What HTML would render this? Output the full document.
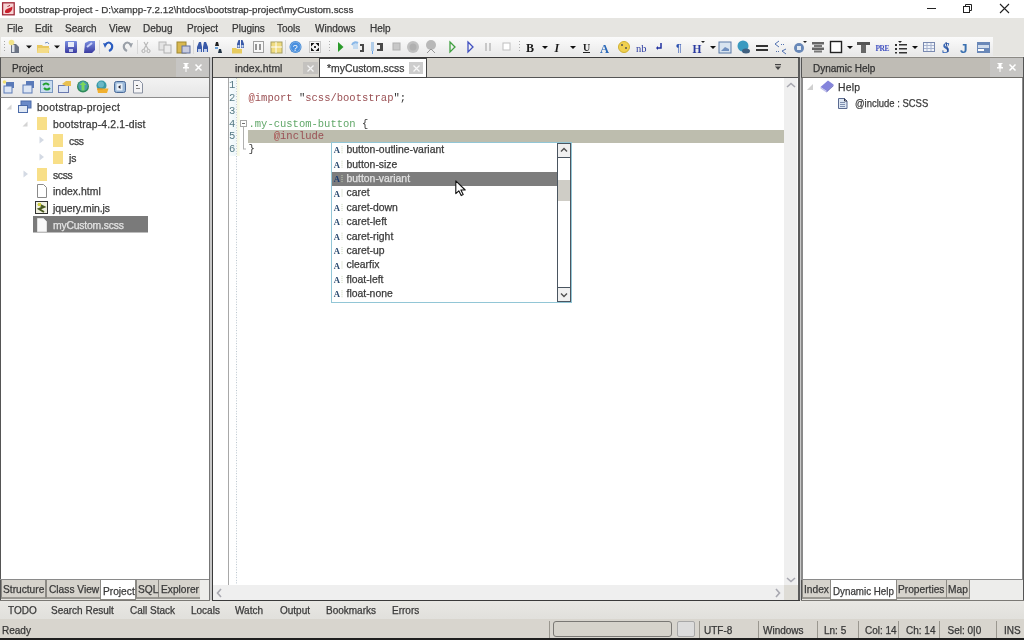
<!DOCTYPE html>
<html><head><meta charset="utf-8">
<style>
*{box-sizing:border-box}
html,body{margin:0;padding:0}
body{width:1024px;height:640px;position:relative;overflow:hidden;background:#e4e2dd;font-family:"Liberation Sans",sans-serif;font-size:10px;color:#3a3a3a}
.a{position:absolute}
.t{position:absolute;white-space:nowrap;line-height:1}
.t,.mn,.tr,.ac,.st,.ot{-webkit-text-stroke:0.25px currentColor}
svg{position:absolute;overflow:visible}
.mn{position:absolute;white-space:nowrap;line-height:1;top:24px;font-size:10px;color:#383838}
.cd{position:absolute;white-space:pre;line-height:1;font-family:"Liberation Mono",monospace;font-size:10.5px}
.tr{position:absolute;white-space:nowrap;line-height:1;font-size:10.4px;letter-spacing:0.2px;color:#3a3a3a}
.ac{position:absolute;white-space:nowrap;line-height:1;font-size:10.4px;color:#3a3a3a;left:346.5px}
.ai{position:absolute;left:334px;width:8px;height:9px}
.st{position:absolute;white-space:nowrap;line-height:1;font-size:10px;color:#383838;top:626px}
.sep{position:absolute;top:621px;width:1px;height:17px;background:#9a978f}
.ot{position:absolute;white-space:nowrap;line-height:1;font-size:10px;color:#3a3a3a;top:605.7px}
#wrap{position:absolute;left:0;top:0;width:1024px;height:640px;overflow:hidden;filter:blur(0.4px);will-change:transform}
</style></head><body><div id="wrap">
<!-- ===== TITLE BAR ===== -->
<div class="a" style="left:0;top:0;width:1024px;height:18px;background:#fff"></div>
<svg style="left:1px;top:1px" width="15" height="15" viewBox="0 0 15 15">
 <rect x="1.6" y="1.8" width="11.6" height="12" fill="#f6d4d4" stroke="#a02838" stroke-width="1.3"/>
 <path d="M4 11.5 Q3.5 8.5 7 7.5 Q10 6.5 11.5 5.5 Q11.5 10 8.5 11.5 Q6 12.5 4 11.5Z" fill="#c8202c"/>
 <path d="M6.5 6 Q7.5 4.5 9 4.5" stroke="#a02030" stroke-width="1" fill="none"/>
</svg>
<div class="t" style="left:19px;top:5.1px;font-size:9.8px;color:#3c3c3c">bootstrap-project - D:\xampp-7.2.12\htdocs\bootstrap-project\myCustom.scss</div>
<div class="a" style="left:927px;top:8px;width:9px;height:1px;background:#222"></div>
<svg style="left:962px;top:3px" width="11" height="11" viewBox="0 0 11 11"><rect x="1.5" y="3.5" width="6" height="6" fill="none" stroke="#222"/><path d="M3.5 3.5V1.5H9.5V7.5H7.5" fill="none" stroke="#222"/></svg>
<svg style="left:999px;top:3px" width="11" height="11" viewBox="0 0 11 11"><path d="M1 1L10 10M10 1L1 10" stroke="#222" stroke-width="1.1"/></svg>

<!-- ===== MENU BAR ===== -->
<div class="a" style="left:0;top:18px;width:1024px;height:19px;background:#e6e5e1"></div>
<div class="mn" style="left:7px">File</div>
<div class="mn" style="left:35px">Edit</div>
<div class="mn" style="left:65px">Search</div>
<div class="mn" style="left:109px">View</div>
<div class="mn" style="left:143px">Debug</div>
<div class="mn" style="left:187px">Project</div>
<div class="mn" style="left:232px">Plugins</div>
<div class="mn" style="left:277px">Tools</div>
<div class="mn" style="left:315px">Windows</div>
<div class="mn" style="left:370px">Help</div>

<!-- ===== TOOLBAR ===== -->
<div class="a" style="left:0;top:37px;width:1024px;height:20px;background:#e6e5e1"></div>
<div class="a" style="left:1px;top:37px;width:992px;height:19px;background:linear-gradient(#fbfbfb,#f0f0f0 60%,#e8e8e8)"></div>
<svg style="left:0;top:37px" width="993" height="19" viewBox="0 37 993 19">
 <defs>
  <linearGradient id="gb" x1="0" y1="0" x2="0" y2="1"><stop offset="0" stop-color="#7a8fe0"/><stop offset="1" stop-color="#3a3aa0"/></linearGradient>
  <linearGradient id="gy" x1="0" y1="0" x2="0" y2="1"><stop offset="0" stop-color="#f8e8a0"/><stop offset="1" stop-color="#d8b048"/></linearGradient>
 </defs>
 <!-- grip -->
 <g fill="#a8a8a8"><rect x="4" y="41" width="1" height="1"/><rect x="4" y="44" width="1" height="1"/><rect x="4" y="47" width="1" height="1"/><rect x="4" y="50" width="1" height="1"/></g>
 <!-- new -->
 <path d="M11 44h5l3 3v6h-8z" fill="#6a7384"/><rect x="12" y="45" width="2.5" height="7" fill="#dfe3ea"/><circle cx="11.5" cy="42.5" r="2.8" fill="#f2e48a"/>
 <path d="M26 45.5h6l-3 3z" fill="#111"/>
 <!-- open -->
 <path d="M37 45h5l1 1h6v7h-12z" fill="#e8c860"/><path d="M38 48h12l-2 5h-11z" fill="#f4dc88"/><path d="M45 43q3-2 4 1" stroke="#7090c0" fill="none"/>
 <path d="M54 45.5h6l-3 3z" fill="#111"/>
 <!-- save -->
 <rect x="65" y="41" width="12" height="12" rx="1" fill="url(#gb)"/><rect x="68" y="42" width="6" height="5" fill="#e8ecf8"/><rect x="69" y="49" width="4" height="3" fill="#c0c8e8"/>
 <!-- save all -->
 <path d="M85 43l4-2h6v9l-3 3h-8z" fill="url(#gb)"/><path d="M87 47l5-4" stroke="#c8d0f8" stroke-width="2"/>
 <rect x="99" y="40" width="1" height="14" fill="#d8d8d8"/>
 <!-- undo -->
 <path d="M105 45 q4-5 7 0 q1 4-3 6" stroke="#2a5cc0" stroke-width="2.2" fill="none"/><path d="M103 43l4 1-2 4z" fill="#2a5cc0"/>
 <!-- redo -->
 <path d="M131 45 q-4-5-7 0 q-1 4 3 6" stroke="#9aa0a8" stroke-width="2.2" fill="none"/><path d="M133 43l-4 1 2 4z" fill="#9aa0a8"/>
 <rect x="137" y="40" width="1" height="14" fill="#d8d8d8"/>
 <!-- cut -->
 <path d="M144 42l4 7M148 42l-4 7" stroke="#b8b8b8" stroke-width="1.2"/><circle cx="143.5" cy="51" r="1.6" fill="none" stroke="#b0b0b0"/><circle cx="148.5" cy="51" r="1.6" fill="none" stroke="#b0b0b0"/>
 <!-- copy -->
 <rect x="159" y="42" width="7" height="8" fill="#e4e4e4" stroke="#b8b8b8"/><rect x="164" y="45" width="7" height="8" fill="#ececec" stroke="#b0b0b0"/>
 <!-- paste -->
 <rect x="177" y="42" width="9" height="11" fill="#d8b850" stroke="#a08830"/><rect x="182" y="46" width="8" height="7" fill="#c8cce0" stroke="#6070a0"/>
 <rect x="193" y="40" width="1" height="14" fill="#d8d8d8"/>
 <!-- find -->
 <path d="M197 52v-5l2-5h2l1 5v5z M203 52v-5l1-5h2l2 5v5z" fill="#3a5aa8"/><rect x="198" y="49" width="3" height="3" fill="#c0d0f0"/><rect x="204" y="49" width="3" height="3" fill="#c0d0f0"/>
 <!-- replace -->
 <path d="M216 42h2l1 4h-4z" fill="#222"/><rect x="215" y="47" width="3" height="2" fill="#6aa0d8"/><path d="M219 49h2l1 4h-4z" fill="#234"/>
 <!-- find in files -->
 <path d="M232 48h4l1 1h5v4.5h-10z" fill="#e8cc60"/><path d="M237 48v-4l1.5-4h1.5v8zM241 48v-8h1.5l1.5 4v4z" fill="#3a5aa8"/><rect x="237.5" y="45" width="2" height="2.5" fill="#c8d8f0"/><rect x="241.5" y="45" width="2" height="2.5" fill="#c8d8f0"/>
 <!-- page grid -->
 <rect x="253.5" y="41.5" width="10" height="11" fill="#f8f8f8" stroke="#a0a0a0"/><path d="M256 44v6M260 44v6" stroke="#555" stroke-width="1.2"/>
 <rect x="271" y="42" width="11" height="11" fill="#f0dc80" stroke="#a8a060"/><path d="M276 42v11M271 47h11" stroke="#fff"/>
 <rect x="285" y="40" width="1" height="14" fill="#d8d8d8"/>
 <!-- help -->
 <circle cx="295.5" cy="47" r="6" fill="#3a80d0"/><circle cx="295.5" cy="47" r="5" fill="#4a90e0" stroke="#a0c8f0" stroke-width="0.6"/><text x="292.8" y="50.5" font-size="9" fill="#fff" font-family="Liberation Sans">?</text>
 <!-- fullscreen -->
 <rect x="309.5" y="41.5" width="11" height="11" fill="#f4f4f4" stroke="#c8c8c8"/><path d="M311 43h3.5l-3.5 3.5zM319 43h-3.5l3.5 3.5zM311 51h3.5l-3.5-3.5zM319 51h-3.5l3.5-3.5z" fill="#111"/><rect x="314" y="46" width="2" height="2" fill="#333"/>
 <g fill="#b0b0b0"><rect x="329" y="41" width="1" height="1"/><rect x="329" y="44" width="1" height="1"/><rect x="329" y="47" width="1" height="1"/><rect x="329" y="50" width="1" height="1"/></g>
 <!-- debug -->
 <path d="M338 42l5.5 5-5.5 5z" fill="#2a9a2a"/>
 <path d="M352 45q2-4 6-2" stroke="#8ab8e8" stroke-width="2" fill="none"/><rect x="353" y="44" width="5" height="5" fill="#b8d4f0" opacity="0.8"/><path d="M360 44h4v8h-4v-2h2v-4h-2z" fill="#484848"/>
 <rect x="371" y="42" width="3" height="9" fill="#b0cce8"/><path d="M372.5 51v3" stroke="#6aa0e0"/><path d="M377 43h6v8h-6v-2h3v-4h-3z" fill="#484848"/>
 <rect x="393" y="43" width="7" height="7" fill="#c8c8c8" stroke="#b0b0b0"/>
 <circle cx="413" cy="47" r="6" fill="#c0c0c0"/><circle cx="413" cy="47" r="3.5" fill="#b0b0b0"/>
 <circle cx="431" cy="45" r="5" fill="#b8b8b8"/><path d="M427 53l4-4 4 4" stroke="#999" fill="none"/>
 <path d="M450 42l5 5-5 5z" fill="none" stroke="#40a040" stroke-width="1.3"/>
 <path d="M468 42l5 5-5 5z" fill="none" stroke="#4050c0" stroke-width="1.3"/>
 <rect x="485" y="43" width="2" height="8" fill="#c8c8c8"/><rect x="489" y="43" width="2" height="8" fill="#c8c8c8"/>
 <rect x="503" y="43" width="7" height="7" fill="#fff" stroke="#c0c0c0"/>
 <g fill="#b0b0b0"><rect x="519" y="41" width="1" height="1"/><rect x="519" y="44" width="1" height="1"/><rect x="519" y="47" width="1" height="1"/><rect x="519" y="50" width="1" height="1"/></g>
 <!-- formatting -->
 <text x="526" y="52" font-size="12" font-weight="bold" fill="#1a1a1a" font-family="Liberation Serif">B</text>
 <path d="M542 46h6l-3 3z" fill="#111"/>
 <text x="554.5" y="52" font-size="12" font-style="italic" font-weight="bold" fill="#1a1a1a" font-family="Liberation Serif">I</text>
 <path d="M570 46h6l-3 3z" fill="#111"/>
 <text x="583" y="51" font-size="10" font-weight="bold" fill="#222" font-family="Liberation Serif">U</text><rect x="583" y="52" width="7" height="1" fill="#222"/>
 <text x="600" y="52.5" font-size="12.5" font-weight="bold" fill="#2a68b8" font-family="Liberation Serif">A</text>
 <circle cx="624" cy="47" r="5.5" fill="#f0d050" stroke="#d0b030"/><circle cx="622" cy="45" r="1" fill="#555"/><circle cx="626" cy="48" r="1" fill="#555"/>
 <text x="636" y="51.5" font-size="10.5" fill="#2a3aa0" font-family="Liberation Serif">nb</text>
 <path d="M661 43v5h-4" stroke="#2030a0" stroke-width="1.5" fill="none"/><path d="M658 46l-2 2 2 2z" fill="#2030a0"/>
 <text x="676" y="52" font-size="10.5" fill="#2a50b0" font-family="Liberation Sans">¶</text>
 <text x="692.5" y="52.5" font-size="11.5" font-weight="bold" fill="#2a3aa0" font-family="Liberation Serif">H</text><path d="M701 41h4l-2 2z" fill="#222"/>
 <path d="M710 46h6l-3 3z" fill="#111"/>
 <rect x="719" y="42" width="12" height="11" fill="#d8e4f0" stroke="#5a7aa8"/><path d="M721 51l4-4 4 2v2z" fill="#7090c0"/>
 <circle cx="743" cy="46" r="5.5" fill="#3a9ac0"/><ellipse cx="746" cy="51" rx="4" ry="2.5" fill="#406080"/>
 <rect x="756" y="45" width="12" height="2" fill="#333"/><rect x="756" y="49" width="12" height="2" fill="#333"/>
 <path d="M779 41l-4 3 4 3M786 49l-4 2 4 3" stroke="#5070b0" fill="none"/><g fill="#5070b0"><rect x="781" y="44" width="1" height="1"/><rect x="783" y="44" width="1" height="1"/><rect x="776" y="51" width="1" height="1"/><rect x="778" y="51" width="1" height="1"/></g>
 <circle cx="799" cy="48" r="5" fill="#6888b8"/><rect x="797" y="46" width="4" height="4" fill="#e0e8f0"/><path d="M803 41h4l-2 2z" fill="#222"/>
 <rect x="812" y="42" width="12" height="2.5" fill="#666"/><rect x="814" y="45" width="8" height="2" fill="#777"/><rect x="812" y="47.5" width="12" height="2.5" fill="#666"/><rect x="814" y="50.5" width="8" height="2" fill="#777"/>
 <rect x="830.5" y="41.5" width="11" height="11" fill="#fff" stroke="#222" stroke-width="1.4"/>
 <path d="M847 46h6l-3 3z" fill="#111"/>
 <rect x="857" y="42" width="13" height="3" fill="#555"/><rect x="861" y="45" width="5" height="8" fill="#666"/>
 <text x="875.5" y="51" font-size="7.5" font-weight="bold" fill="#4050c0" font-family="Liberation Serif" textLength="14">PRE</text>
 <path d="M898 41h4l-2 2z" fill="#222"/><g fill="#333"><rect x="895" y="44" width="2" height="2"/><rect x="895" y="48" width="2" height="2"/><rect x="895" y="52" width="2" height="1.5"/><rect x="899" y="44" width="8" height="1.5"/><rect x="899" y="48" width="8" height="1.5"/><rect x="899" y="52" width="8" height="1.5"/></g>
 <path d="M912 46h6l-3 3z" fill="#111"/>
 <rect x="923.5" y="42.5" width="11" height="9" fill="#f0f4fa" stroke="#7a8ab0"/><path d="M927 43v8M931 43v8M924 45.5h10M924 48.5h10" stroke="#a8b4d0"/>
 <text x="942" y="53" font-size="14" font-weight="bold" font-style="italic" fill="#3a6ab8" font-family="Liberation Serif">S</text><path d="M946 42l2 10" stroke="#2a4a90" stroke-width="1"/>
 <text x="960" y="52.5" font-size="13.5" font-weight="bold" fill="#3a70b0" font-family="Liberation Sans">J</text>
 <rect x="977" y="42" width="13" height="11" fill="#6a88b8"/><rect x="978" y="45" width="11" height="3" fill="#d0dcec"/><rect x="978" y="49" width="6" height="2" fill="#fff"/>
</svg>
<!-- ===== MAIN BG ===== -->
<div class="a" style="left:0;top:56px;width:1024px;height:544px;background:#ecebe9"></div>
<div class="a" style="left:210px;top:57px;width:2px;height:543px;background:#c8c8c8"></div>
<div class="a" style="left:799px;top:57px;width:2px;height:543px;background:#c8c8c8"></div>

<!-- ===== LEFT PANEL ===== -->
<div class="a" style="left:0;top:57px;width:210px;height:21px;background:#bfbcb5;border-top:1px solid #8c8a85;border-bottom:1px solid #6e6c68;border-left:1px solid #555"></div>
<div class="a" style="left:176px;top:58px;width:33px;height:19px;background:#c6c5c3"></div>
<div class="t" style="left:12px;top:64px;font-size:10px;color:#333">Project</div>
<svg style="left:182px;top:63px" width="8" height="9" viewBox="0 0 8 9"><path d="M1.5 0h5v1h-1v3h1.5v1.5h-2.5v3.5h-1v-3.5h-2.5v-1.5h1.5v-3h-1z" fill="#fff"/></svg>
<svg style="left:195px;top:64px" width="7" height="7" viewBox="0 0 7 7"><path d="M0.5 0.5L6.5 6.5M6.5 0.5L0.5 6.5" stroke="#fff" stroke-width="1.5"/></svg>
<div class="a" style="left:0;top:78px;width:210px;height:20px;background:linear-gradient(#f2f2f2,#e6e6e6);border-left:1px solid #555"></div>
<svg style="left:0;top:78px" width="150" height="20" viewBox="0 78 150 20">
 <rect x="6" y="82" width="8" height="6" fill="#5a7ab8"/><rect x="4" y="86" width="8" height="7" fill="#dde6f4" stroke="#5a7ab8"/><circle cx="4.5" cy="82" r="1.8" fill="#f0e070"/>
 <rect x="26" y="81" width="8" height="7" fill="#5a7ab8"/><rect x="23" y="85" width="9" height="8" fill="#dde6f4" stroke="#5a7ab8"/>
 <rect x="40.5" y="80.5" width="12" height="12" fill="#c8dcf0" stroke="#7a98c0"/><path d="M43 85q3-3 6 0M50 88q-3 3-6 0" stroke="#20a030" stroke-width="2" fill="none"/>
 <rect x="58.5" y="85.5" width="10" height="7" fill="#dde6f4" stroke="#6a7ab0"/><path d="M62 84l4-3h5v5h-5z" fill="#e8c050"/>
 <circle cx="83" cy="86.5" r="6" fill="#2e8a5a"/><circle cx="83" cy="86" r="4.8" fill="#4a9ab0"/><path d="M83 81.5l3.5 3.5h-2v5.5h-3v-5.5h-2z" fill="#7ad85a"/>
 <circle cx="101.5" cy="85.5" r="5" fill="#3a9aa8"/><circle cx="101" cy="84.5" r="3" fill="#6ab8c8"/><path d="M97 88.5h11.5l-1.5 4.5h-9z" fill="#f0b030"/><path d="M97 88.5h5l1 1h-6z" fill="#d89020"/>
 <rect x="114.5" y="81.5" width="11" height="11" rx="2" fill="#9ab8d8" stroke="#4a6a98"/><rect x="116.5" y="83.5" width="6" height="7" fill="#e8f0f8"/><path d="M118 87l2.5-2v4z" fill="#223"/>
 <path d="M133.5 80.5h6l3 3v9.5h-9z" fill="#f4f4f6" stroke="#8890a0"/><rect x="136" y="85" width="2" height="1" fill="#555"/><rect x="136" y="88" width="4" height="1" fill="#888"/>
</svg>
<div class="a" style="left:0;top:97px;width:210px;height:483px;background:#fff;border:1px solid #8c8c8c;border-left-color:#555"></div>

<!-- tree -->
<svg style="left:0;top:98px" width="210" height="140" viewBox="0 98 210 140">
 <path d="M11.5 104.5v5h-5z" fill="#d4d4d4"/>
 <rect x="21" y="101" width="10" height="7" fill="#6a8ac8" stroke="#4a6aa8"/><rect x="18.5" y="105.5" width="9" height="7" fill="#e0e8f4" stroke="#4a6aa8"/>
 <path d="M27.5 121.5v5h-5z" fill="#d4d4d4"/>
 <rect x="37" y="117" width="10" height="13" fill="#f8df88"/>
 <path d="M39.5 136.5v7l4.5-3.5z" fill="#d4dae4"/>
 <rect x="53" y="134" width="10" height="13" fill="#f8df88"/>
 <path d="M39.5 153.5v7l4.5-3.5z" fill="#d4dae4"/>
 <rect x="53" y="151" width="10" height="13" fill="#f8df88"/>
 <path d="M23.5 170.5v7l4.5-3.5z" fill="#d4dae4"/>
 <rect x="37" y="168" width="10" height="13" fill="#f8df88"/>
 <path d="M37.5 184.5h6l3 3v10h-9z" fill="#fff" stroke="#8a8a8a"/>
 <rect x="35.5" y="201.5" width="12" height="12" fill="#f0f0e0" stroke="#333"/><path d="M38 204l6 3-5 2 5 3" stroke="#4a5a20" stroke-width="2" fill="none"/><rect x="38" y="203" width="3" height="3" fill="#d0d040"/>
 <rect x="33" y="216" width="115" height="16.5" fill="#7a7a7a"/>
 <path d="M37.5 218.5h6l3 3v10h-9z" fill="#f8f8f8" stroke="#e0e0e0"/>
</svg>
<div class="tr" style="left:37px;top:103px;letter-spacing:0.3px">bootstrap-project</div>
<div class="tr" style="left:53px;top:120px;letter-spacing:0.15px">bootstrap-4.2.1-dist</div>
<div class="tr" style="left:69px;top:137px;letter-spacing:-0.3px">css</div>
<div class="tr" style="left:69px;top:154px;letter-spacing:0px">js</div>
<div class="tr" style="left:53px;top:171px;letter-spacing:-0.35px">scss</div>
<div class="tr" style="left:53px;top:187px;letter-spacing:0.05px">index.html</div>
<div class="tr" style="left:53px;top:204px;letter-spacing:-0.05px">jquery.min.js</div>
<div class="tr" style="left:53px;top:221px;color:#e4e4e4;letter-spacing:-0.2px">myCustom.scss</div>

<!-- left bottom tabs -->
<div class="a" style="left:0;top:579px;width:210px;height:21px;background:#e6e5e1;border-left:1px solid #555"></div>
<div class="a" style="left:1px;top:579px;width:45px;height:20px;background:#d6d3cc;border:1px solid #8c8a85;border-bottom:2px solid #9a9892"></div>
<div class="a" style="left:46px;top:579px;width:55px;height:20px;background:#d6d3cc;border:1px solid #8c8a85;border-bottom:2px solid #9a9892"></div>
<div class="a" style="left:100px;top:579px;width:36px;height:21px;background:#fff;border:1px solid #8c8a85;border-top:none"></div>
<div class="a" style="left:136px;top:579px;width:23px;height:20px;background:#d6d3cc;border:1px solid #8c8a85;border-bottom:2px solid #9a9892"></div>
<div class="a" style="left:158px;top:579px;width:43px;height:20px;background:#d6d3cc;border:1px solid #8c8a85;border-bottom:2px solid #9a9892"></div>
<div class="a" style="left:200px;top:579px;width:10px;height:21px;background:#ededeb"></div>
<div class="a" style="left:0;top:579px;width:210px;height:1px;background:#8a8a8a"></div>
<div class="a" style="left:209px;top:57px;width:1px;height:543px;background:#777"></div>
<div class="t" style="left:3px;top:585px;font-size:10.2px;color:#3a3a3a">Structure</div>
<div class="t" style="left:49px;top:585px;font-size:10.2px;color:#3a3a3a">Class View</div>
<div class="t" style="left:103px;top:587px;font-size:10.2px;color:#3a3a3a">Project</div>
<div class="t" style="left:138px;top:585px;font-size:10.2px;color:#3a3a3a">SQL</div>
<div class="t" style="left:161px;top:585px;font-size:10.2px;color:#3a3a3a">Explorer</div>
<!-- ===== EDITOR ===== -->
<div class="a" style="left:212px;top:57px;width:588px;height:544px;background:#fff;border:1px solid #3a3a3a;border-right:2px solid #5a5a5a"></div>
<div class="a" style="left:213px;top:58px;width:585px;height:20px;background:#d6d3cc;border-bottom:1px solid #555"></div>
<!-- tab 1 -->
<div class="t" style="left:235px;top:64px;font-size:10.4px;color:#3a3a3a">index.html</div>
<div class="a" style="left:303px;top:62px;width:15px;height:12px;background:#c4c2bf"></div>
<svg style="left:307px;top:65px" width="7" height="7" viewBox="0 0 7 7"><path d="M0.5 0.5L6.5 6.5M6.5 0.5L0.5 6.5" stroke="#f4f4f4" stroke-width="1.3"/></svg>
<!-- tab 2 -->
<div class="a" style="left:319px;top:58px;width:108px;height:20px;background:#fff;border:1px solid #444;border-bottom:1px solid #444"></div>
<div class="t" style="left:327px;top:64px;font-size:10.4px;color:#3a3a3a">*myCustom.scss</div>
<div class="a" style="left:409px;top:62px;width:14px;height:12px;background:#cdcdcd"></div>
<svg style="left:412.5px;top:65px" width="7" height="7" viewBox="0 0 7 7"><path d="M0.5 0.5L6.5 6.5M6.5 0.5L0.5 6.5" stroke="#f8f8f8" stroke-width="1.3"/></svg>
<!-- dropdown on tab bar -->
<svg style="left:774px;top:64px" width="8" height="7" viewBox="0 0 8 7"><rect x="1" y="0" width="6" height="1.2" fill="#444"/><path d="M1 2.5h6l-3 3.5z" fill="#444"/></svg>

<!-- gutter -->
<div class="a" style="left:228px;top:78px;width:1px;height:507px;background:#a8a8a8"></div>
<div class="a" style="left:229px;top:78px;width:7px;height:78px;background:linear-gradient(90deg,#f8fcfd,#eef7fa)"></div>
<div class="a" style="left:237px;top:78px;width:3px;height:78px;background:linear-gradient(90deg,#f6f8e0,#fbfcf0)"></div>
<svg style="left:235px;top:78px" width="3" height="507" viewBox="0 0 3 507"><defs><pattern id="dt" width="3" height="2.6" patternUnits="userSpaceOnUse"><rect x="1" y="0" width="1" height="1" fill="#b8c4cc"/></pattern></defs><rect width="3" height="507" fill="url(#dt)"/></svg>
<div class="cd" style="left:229px;top:79.3px;color:#557a85;font-size:10.5px;line-height:12.8px">1
2
3
4
5
6</div>
<!-- fold -->
<svg style="left:239px;top:119px" width="9" height="32" viewBox="0 0 9 32"><rect x="1.5" y="1.5" width="6" height="6" fill="#fff" stroke="#a8a8a8"/><rect x="3" y="4" width="3" height="1" fill="#707070"/><rect x="4" y="8" width="1" height="22" fill="#b0b0b0"/><rect x="4" y="29.5" width="3" height="1" fill="#b0b0b0"/></svg>

<!-- current line highlight -->
<div class="a" style="left:248px;top:130px;width:536px;height:13px;background:#bdbdae"></div>

<!-- code -->
<div class="cd" style="left:248.5px;top:93px;color:#9a5054"><span style="color:#a85050">@</span>import <span style="color:#333">"</span>scss/bootstrap<span style="color:#333">";</span></div>
<div class="cd" style="left:248.5px;top:118.5px;color:#62a86a">.my-custom-button <span style="color:#333">{</span></div>
<div class="cd" style="left:248.5px;top:131px;color:#9a5054">    <span style="color:#a85050">@</span>include</div>
<div class="cd" style="left:248.5px;top:144px;color:#333">}</div>

<!-- scrollbars -->
<div class="a" style="left:784px;top:78px;width:13px;height:507px;background:#efefef"></div><div class="a" style="left:797px;top:78px;width:1px;height:507px;background:#fafafa"></div>
<svg style="left:786px;top:82px" width="10" height="6" viewBox="0 0 10 6"><path d="M1 5L5 1.5L9 5" stroke="#a8a8b0" stroke-width="1.6" fill="none"/></svg>
<svg style="left:786px;top:577px" width="10" height="6" viewBox="0 0 10 6"><path d="M1 1L5 4.5L9 1" stroke="#a8a8b0" stroke-width="1.6" fill="none"/></svg>
<div class="a" style="left:213px;top:585px;width:571px;height:15px;background:#efefef"></div>
<svg style="left:216px;top:588px" width="6" height="10" viewBox="0 0 6 10"><path d="M5 1L1.5 5L5 9" stroke="#a8a8b0" stroke-width="1.6" fill="none"/></svg>
<svg style="left:775px;top:588px" width="6" height="10" viewBox="0 0 6 10"><path d="M1 1L4.5 5L1 9" stroke="#a8a8b0" stroke-width="1.6" fill="none"/></svg>
<div class="a" style="left:784px;top:585px;width:14px;height:15px;background:#dedcd6"></div>

<!-- autocomplete popup -->
<div class="a" style="left:331px;top:142px;width:241px;height:161px;background:#fff;border:1px solid #92c6d6"></div>
<div class="a" style="left:332px;top:172px;width:225px;height:14px;background:#7d7d7d"></div>
<div class="a" style="left:557px;top:143px;width:14px;height:159px;background:#fff;border:1px solid #4a5560"></div>
<div class="a" style="left:557px;top:143px;width:14px;height:15px;background:#f0f0f0;border:1px solid #4a5560"></div>
<svg style="left:560px;top:147px" width="8" height="6" viewBox="0 0 8 6"><path d="M1 4.5L4 1.5L7 4.5" stroke="#505050" stroke-width="1.4" fill="none"/></svg>
<div class="a" style="left:558px;top:180px;width:12px;height:21px;background:#cfcdc6"></div>
<div class="a" style="left:557px;top:287px;width:14px;height:15px;background:#f0f0f0;border:1px solid #4a5560"></div>
<svg style="left:560px;top:292px" width="8" height="6" viewBox="0 0 8 6"><path d="M1 1.5L4 4.5L7 1.5" stroke="#505050" stroke-width="1.4" fill="none"/></svg>
<div class="ac" style="top:145.2px">button-outline-variant</div>
<div class="ac" style="top:159.6px">button-size</div>
<div class="ac" style="top:174.0px;color:#e2e2e2">button-variant</div>
<div class="ac" style="top:188.4px">caret</div>
<div class="ac" style="top:202.8px">caret-down</div>
<div class="ac" style="top:217.2px">caret-left</div>
<div class="ac" style="top:231.6px">caret-right</div>
<div class="ac" style="top:246.0px">caret-up</div>
<div class="ac" style="top:260.4px">clearfix</div>
<div class="ac" style="top:274.8px">float-left</div>
<div class="ac" style="top:289.2px">float-none</div>
<svg style="left:333px;top:143px" width="12" height="160" viewBox="333 143 12 160">
<text x="333.8" y="153.3" font-size="8.6" font-weight="bold" fill="#2a4a70" font-family="Liberation Serif">A</text>
<rect x="341.5" y="146.3" width="1" height="1" fill="#c8d4b8"/>
<rect x="341.5" y="148.3" width="1" height="1" fill="#c8d4b8"/>
<rect x="341.5" y="150.3" width="1" height="1" fill="#c8d4b8"/>
<rect x="341.5" y="152.3" width="1" height="1" fill="#c8d4b8"/>
<text x="333.8" y="167.7" font-size="8.6" font-weight="bold" fill="#2a4a70" font-family="Liberation Serif">A</text>
<rect x="341.5" y="160.7" width="1" height="1" fill="#c8d4b8"/>
<rect x="341.5" y="162.7" width="1" height="1" fill="#c8d4b8"/>
<rect x="341.5" y="164.7" width="1" height="1" fill="#c8d4b8"/>
<rect x="341.5" y="166.7" width="1" height="1" fill="#c8d4b8"/>
<text x="333.8" y="182.1" font-size="8.6" font-weight="bold" fill="#1a3a70" font-family="Liberation Serif">A</text>
<rect x="341.5" y="175.1" width="1" height="1" fill="#c8d4b8"/>
<rect x="341.5" y="177.1" width="1" height="1" fill="#c8d4b8"/>
<rect x="341.5" y="179.1" width="1" height="1" fill="#c8d4b8"/>
<rect x="341.5" y="181.1" width="1" height="1" fill="#c8d4b8"/>
<text x="333.8" y="196.5" font-size="8.6" font-weight="bold" fill="#2a4a70" font-family="Liberation Serif">A</text>
<rect x="341.5" y="189.5" width="1" height="1" fill="#c8d4b8"/>
<rect x="341.5" y="191.5" width="1" height="1" fill="#c8d4b8"/>
<rect x="341.5" y="193.5" width="1" height="1" fill="#c8d4b8"/>
<rect x="341.5" y="195.5" width="1" height="1" fill="#c8d4b8"/>
<text x="333.8" y="210.9" font-size="8.6" font-weight="bold" fill="#2a4a70" font-family="Liberation Serif">A</text>
<rect x="341.5" y="203.9" width="1" height="1" fill="#c8d4b8"/>
<rect x="341.5" y="205.9" width="1" height="1" fill="#c8d4b8"/>
<rect x="341.5" y="207.9" width="1" height="1" fill="#c8d4b8"/>
<rect x="341.5" y="209.9" width="1" height="1" fill="#c8d4b8"/>
<text x="333.8" y="225.3" font-size="8.6" font-weight="bold" fill="#2a4a70" font-family="Liberation Serif">A</text>
<rect x="341.5" y="218.3" width="1" height="1" fill="#c8d4b8"/>
<rect x="341.5" y="220.3" width="1" height="1" fill="#c8d4b8"/>
<rect x="341.5" y="222.3" width="1" height="1" fill="#c8d4b8"/>
<rect x="341.5" y="224.3" width="1" height="1" fill="#c8d4b8"/>
<text x="333.8" y="239.7" font-size="8.6" font-weight="bold" fill="#2a4a70" font-family="Liberation Serif">A</text>
<rect x="341.5" y="232.7" width="1" height="1" fill="#c8d4b8"/>
<rect x="341.5" y="234.7" width="1" height="1" fill="#c8d4b8"/>
<rect x="341.5" y="236.7" width="1" height="1" fill="#c8d4b8"/>
<rect x="341.5" y="238.7" width="1" height="1" fill="#c8d4b8"/>
<text x="333.8" y="254.1" font-size="8.6" font-weight="bold" fill="#2a4a70" font-family="Liberation Serif">A</text>
<rect x="341.5" y="247.1" width="1" height="1" fill="#c8d4b8"/>
<rect x="341.5" y="249.1" width="1" height="1" fill="#c8d4b8"/>
<rect x="341.5" y="251.1" width="1" height="1" fill="#c8d4b8"/>
<rect x="341.5" y="253.1" width="1" height="1" fill="#c8d4b8"/>
<text x="333.8" y="268.5" font-size="8.6" font-weight="bold" fill="#2a4a70" font-family="Liberation Serif">A</text>
<rect x="341.5" y="261.5" width="1" height="1" fill="#c8d4b8"/>
<rect x="341.5" y="263.5" width="1" height="1" fill="#c8d4b8"/>
<rect x="341.5" y="265.5" width="1" height="1" fill="#c8d4b8"/>
<rect x="341.5" y="267.5" width="1" height="1" fill="#c8d4b8"/>
<text x="333.8" y="282.9" font-size="8.6" font-weight="bold" fill="#2a4a70" font-family="Liberation Serif">A</text>
<rect x="341.5" y="275.9" width="1" height="1" fill="#c8d4b8"/>
<rect x="341.5" y="277.9" width="1" height="1" fill="#c8d4b8"/>
<rect x="341.5" y="279.9" width="1" height="1" fill="#c8d4b8"/>
<rect x="341.5" y="281.9" width="1" height="1" fill="#c8d4b8"/>
<text x="333.8" y="297.3" font-size="8.6" font-weight="bold" fill="#2a4a70" font-family="Liberation Serif">A</text>
<rect x="341.5" y="290.3" width="1" height="1" fill="#c8d4b8"/>
<rect x="341.5" y="292.3" width="1" height="1" fill="#c8d4b8"/>
<rect x="341.5" y="294.3" width="1" height="1" fill="#c8d4b8"/>
<rect x="341.5" y="296.3" width="1" height="1" fill="#c8d4b8"/>
</svg>
<!-- mouse cursor -->
<svg style="left:455px;top:179.5px" width="14" height="18" viewBox="0 0 14 18"><path d="M0.8 0.8V13.6L3.8 10.8L6.2 15.6L8.2 14.6L5.9 10H10.2Z" fill="#fff" stroke="#111" stroke-width="1.1" stroke-linejoin="round"/></svg>

<!-- ===== RIGHT PANEL ===== -->
<div class="a" style="left:801px;top:57px;width:223px;height:21px;background:#bfbcb5;border-top:1px solid #8c8a85;border-bottom:1px solid #6e6c68;border-left:1px solid #555"></div>
<div class="a" style="left:990px;top:58px;width:33px;height:19px;background:#c6c5c3"></div>
<div class="t" style="left:813px;top:64px;font-size:10px;color:#333">Dynamic Help</div>
<svg style="left:996px;top:63px" width="8" height="9" viewBox="0 0 8 9"><path d="M1.5 0h5v1h-1v3h1.5v1.5h-2.5v3.5h-1v-3.5h-2.5v-1.5h1.5v-3h-1z" fill="#fff"/></svg>
<svg style="left:1009px;top:64px" width="7" height="7" viewBox="0 0 7 7"><path d="M0.5 0.5L6.5 6.5M6.5 0.5L0.5 6.5" stroke="#fff" stroke-width="1.5"/></svg>
<div class="a" style="left:801px;top:78px;width:222px;height:502px;background:#fff;border:1px solid #8c8c8c;border-left:2px solid #8a8a8a;border-top:none"></div>
<svg style="left:801px;top:78px" width="60" height="36" viewBox="801 78 60 36">
 <path d="M813 84v6h-6z" fill="#d0d0d0"/>
 <path d="M820.5 87l7.5-6.5 5.5 4-7 6.5z" fill="#8484dc"/><path d="M820.5 87l6 4v1.5l-6-4z" fill="#c0c0ec"/><path d="M826.5 91l7-6.5v1.5l-7 6.5z" fill="#6a6ac0"/>
 <path d="M838.5 98.5h6l2.5 2.5v7.5h-8.5z" fill="#dde6f2" stroke="#5a6a90"/><path d="M844.5 98.5v2.5h2.5" fill="none" stroke="#334"/><rect x="840" y="102" width="5" height="1" fill="#8090b0"/><rect x="840" y="104" width="5" height="1" fill="#8090b0"/><rect x="840" y="106" width="5" height="1" fill="#8090b0"/>
</svg>
<div class="tr" style="left:838px;top:83px">Help</div>
<div class="tr" style="left:854.5px;top:99px;letter-spacing:0;transform:scaleX(0.91);transform-origin:0 0">@include : SCSS</div>

<!-- right bottom tabs -->
<div class="a" style="left:801px;top:579px;width:223px;height:21px;background:#e6e5e1;border-left:1px solid #555"></div>
<div class="a" style="left:802px;top:579px;width:29px;height:20px;background:#d6d3cc;border:1px solid #8c8a85;border-bottom:2px solid #9a9892"></div>
<div class="a" style="left:830px;top:579px;width:67px;height:21px;background:#fff;border:1px solid #8c8a85;border-top:none"></div>
<div class="a" style="left:896px;top:579px;width:51px;height:20px;background:#d6d3cc;border:1px solid #8c8a85;border-bottom:2px solid #9a9892"></div>
<div class="a" style="left:946px;top:579px;width:24px;height:20px;background:#d6d3cc;border:1px solid #8c8a85;border-bottom:2px solid #9a9892"></div>
<div class="a" style="left:970px;top:579px;width:53px;height:21px;background:#ededeb"></div>
<div class="a" style="left:801px;top:579px;width:223px;height:1px;background:#8a8a8a"></div>
<div class="a" style="left:1023px;top:57px;width:1px;height:543px;background:#555"></div>
<div class="t" style="left:804px;top:585px;font-size:10.2px;color:#3a3a3a">Index</div>
<div class="t" style="left:833px;top:587px;font-size:10.2px;color:#3a3a3a;transform:scaleX(0.96);transform-origin:0 0">Dynamic Help</div>
<div class="t" style="left:898px;top:585px;font-size:10.2px;color:#3a3a3a">Properties</div>
<div class="t" style="left:948px;top:585px;font-size:10.2px;color:#3a3a3a">Map</div>

<!-- ===== OUTPUT TABS ===== -->
<div class="a" style="left:0;top:601px;width:1024px;height:18px;background:linear-gradient(#e8e7e3,#e1e0dc)"></div>
<div class="a" style="left:0;top:600px;width:210px;height:1px;background:#7a7874"></div>
<div class="a" style="left:212px;top:600px;width:588px;height:1px;background:#3a3a3a"></div>
<div class="a" style="left:801px;top:600px;width:223px;height:1px;background:#7a7874"></div>
<div class="ot" style="left:8px">TODO</div>
<div class="ot" style="left:51px">Search Result</div>
<div class="ot" style="left:130px">Call Stack</div>
<div class="ot" style="left:191px">Locals</div>
<div class="ot" style="left:235px">Watch</div>
<div class="ot" style="left:280px">Output</div>
<div class="ot" style="left:326px">Bookmarks</div>
<div class="ot" style="left:392px">Errors</div>

<!-- ===== STATUS BAR ===== -->
<div class="a" style="left:0;top:619px;width:1024px;height:21px;background:#d8d5ce"></div>
<div class="a" style="left:0;top:638px;width:1024px;height:2px;background:#1e1e1e"></div>
<div class="st" style="left:2px">Ready</div>
<div class="sep" style="left:549px"></div>
<div class="a" style="left:553px;top:621px;width:119px;height:16px;background:#d6d3cb;border:1.5px solid #7a7874;border-radius:3px"></div>
<div class="a" style="left:677px;top:621px;width:18px;height:16px;background:#dcdcdc;border:1px solid #a8a8a8;border-radius:2px"></div>
<div class="sep" style="left:699px"></div>
<div class="st" style="left:704px">UTF-8</div>
<div class="sep" style="left:758px"></div>
<div class="st" style="left:763px">Windows</div>
<div class="sep" style="left:817px"></div>
<div class="st" style="left:824px">Ln: 5</div>
<div class="sep" style="left:858px"></div>
<div class="st" style="left:865px">Col: 14</div>
<div class="sep" style="left:898px"></div>
<div class="st" style="left:906px">Ch: 14</div>
<div class="sep" style="left:939px"></div>
<div class="st" style="left:947.5px">Sel: 0|0</div>
<div class="sep" style="left:996px"></div>
<div class="st" style="left:1004px">INS</div>

</div></body></html>
